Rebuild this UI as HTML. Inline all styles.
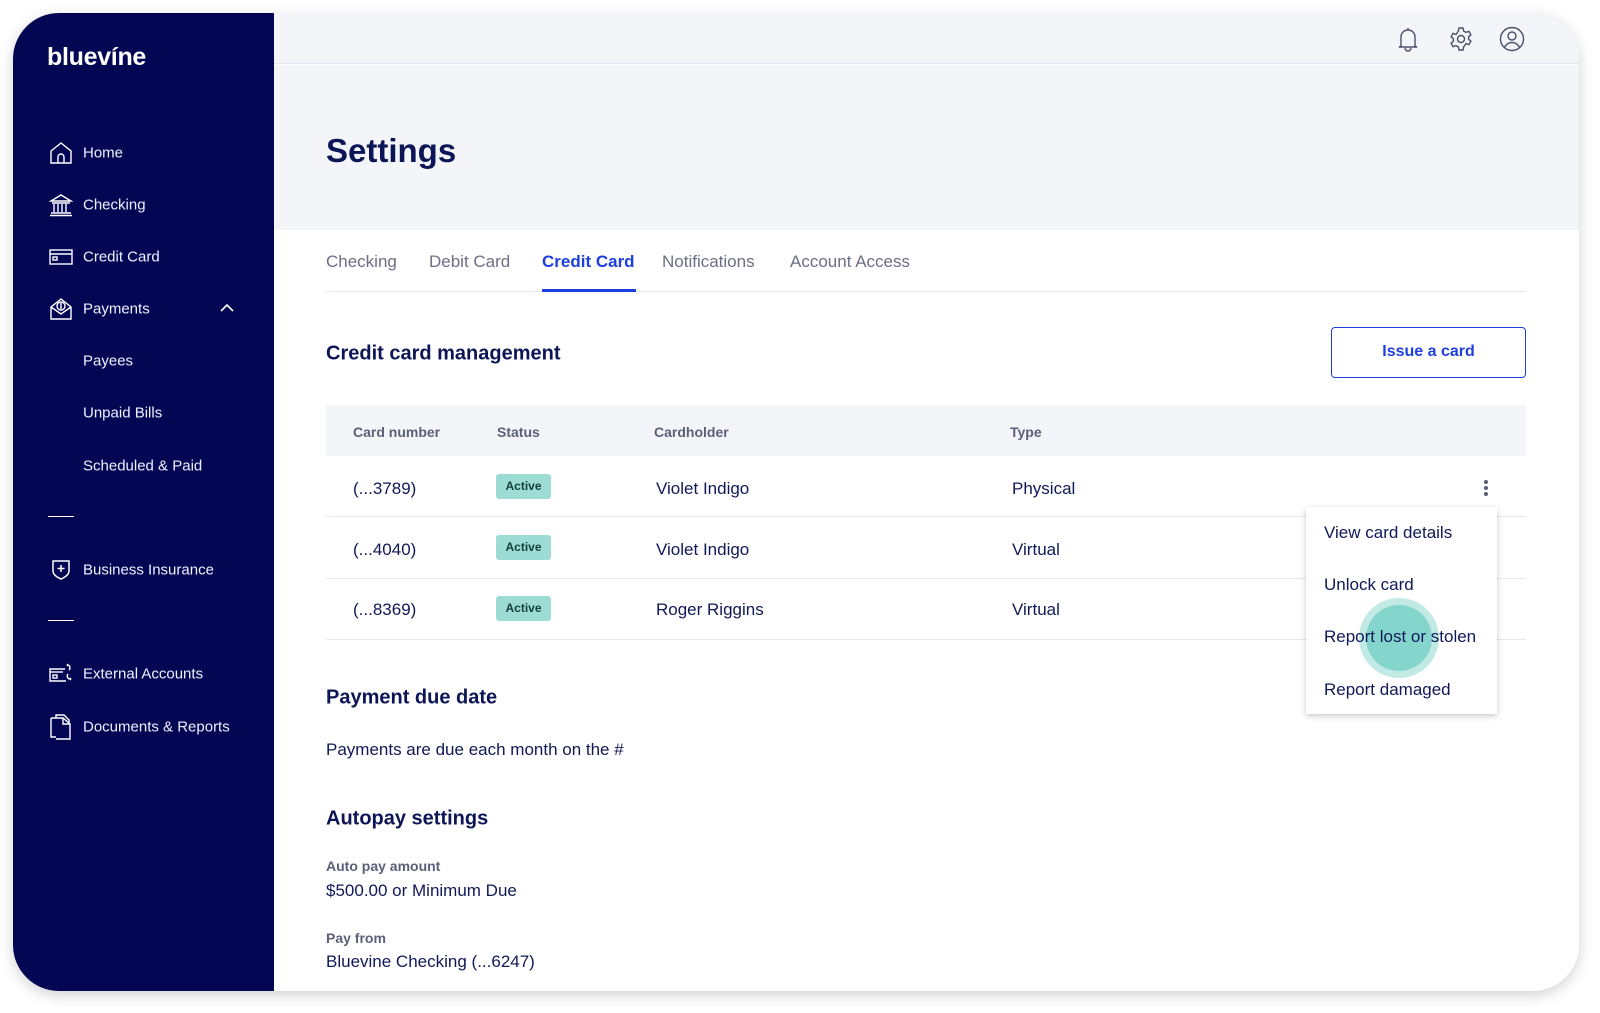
<!DOCTYPE html>
<html><head><meta charset="utf-8"><style>
*{box-sizing:border-box;margin:0;padding:0}
body{width:1600px;height:1013px;background:#fff;font-family:"Liberation Sans",sans-serif;position:relative;overflow:hidden;color:#101857}
.frame{position:absolute;left:13px;top:13px;width:1566px;height:978px;border-radius:46px;overflow:hidden;background:#fff;box-shadow:0 4px 14px rgba(0,0,0,.18)}
.side{position:absolute;left:0;top:0;width:261px;height:100%;background:#020653;color:#fff}
.abs{position:absolute;white-space:nowrap}
.logo{left:34px;top:30px;font-size:25px;font-weight:bold;letter-spacing:-0.3px}
.nav{left:70px;font-size:15px;color:#eef0ff;transform:translateY(-50%)}
.ic{position:absolute;left:36px;transform:translateY(-50%)}
.line{position:absolute;left:35px;width:26px;height:1px;background:#fff}
.top{position:absolute;left:261px;top:0;right:0;height:51px;background:#f4f5f9;border-bottom:1px solid #e2e5ee}
.hdr{position:absolute;left:261px;top:52px;right:0;height:165px;background:#f4f5f9}
.t{transform:translateY(-50%)}
.tab{font-size:17px;color:#6b6f85}
.th{font-size:14px;font-weight:bold;color:#5b6078}
.td{font-size:17px;color:#101857}
.badge{position:absolute;left:483px;width:55px;height:25px;background:#9ddcd4;border-radius:3px;font-size:12px;font-weight:bold;color:#134238;text-align:center;line-height:25px}
.div{position:absolute;left:313px;width:1200px;height:1px;background:#e3e7f0}
.menu{position:absolute;left:1293px;top:494px;width:191px;height:207px;background:#fff;box-shadow:0 2px 6px rgba(0,0,0,.22)}
.mi{font-size:17px;color:#101857;left:1311px}
</style></head><body>
<div class="frame">
<div class="side">
<div class="abs logo">bluevíne</div>
<svg class="ic" style="top:140px" width="24" height="24" viewBox="0 0 24 24" fill="none" stroke="#fff" stroke-width="1.4"><path d="M2 10 12 2l10 8v12H2z"/><path d="M9 22v-6a3 3 0 0 1 6 0v6"/></svg>
<div class="abs nav" style="top:140px">Home</div>
<svg class="ic" style="top:192px" width="24" height="24" viewBox="0 0 24 24" fill="none" stroke="#fff" stroke-width="1.4"><path d="M2 8 12 2l10 6z"/><path d="M3 10h18M5 11v8M9 11v8M13 11v8M17 11v8M2 20h20M1 22.5h22"/></svg>
<div class="abs nav" style="top:192px">Checking</div>
<svg class="ic" style="top:244px" width="24" height="20" viewBox="0 0 24 20" fill="none" stroke="#fff" stroke-width="1.4"><rect x="1" y="3" width="22" height="14"/><path d="M1 7h22"/><rect x="4" y="10" width="4" height="3"/></svg>
<div class="abs nav" style="top:244px">Credit Card</div>
<svg class="ic" style="top:296px" width="24" height="24" viewBox="0 0 24 24" fill="none" stroke="#fff" stroke-width="1.4"><path d="M2 10v12h20V10L12 2z"/><path d="M2 10l10 7 10-7"/><circle cx="12" cy="9" r="4"/><path d="M12 6v6"/></svg>
<div class="abs nav" style="top:296px">Payments</div>
<svg class="abs" style="left:207px;top:290px" width="14" height="10" viewBox="0 0 14 10" fill="none" stroke="#fff" stroke-width="1.6"><path d="M1 8l6-6 6 6"/></svg>
<div class="abs nav" style="top:348px">Payees</div>
<div class="abs nav" style="top:400px">Unpaid Bills</div>
<div class="abs nav" style="top:453px">Scheduled &amp; Paid</div>
<div class="line" style="top:503px"></div>
<svg class="ic" style="top:557px;left:38px" width="20" height="22" viewBox="0 0 20 22" fill="none" stroke="#fff" stroke-width="1.5"><path d="M2 2h16v10c0 5-8 8-8 8s-8-3-8-8z"/><path d="M10 6v7M6.5 9.5h7"/></svg>
<div class="abs nav" style="top:557px">Business Insurance</div>
<div class="line" style="top:607px"></div>
<svg class="ic" style="top:661px" width="24" height="22" viewBox="0 0 24 22" fill="none" stroke="#fff" stroke-width="1.4"><path d="M16 6H1v12h16"/><path d="M1 9h13"/><rect x="4" y="12" width="4" height="3"/><path d="M19 2a3 3 0 0 1 1 5M21 16a3 3 0 0 1-2-5M18 1l1 1-1 1M22 15l-1 1 1 1"/></svg>
<div class="abs nav" style="top:661px">External Accounts</div>
<svg class="ic" style="top:714px;left:37px" width="22" height="26" viewBox="0 0 22 26" fill="none" stroke="#fff" stroke-width="1.4"><path d="M6 4V1h8l5 5v3"/><path d="M1 4h12l7 6v15H6"/><path d="M1 4v19h5"/><path d="M13 4v6h7"/></svg>
<div class="abs nav" style="top:714px">Documents &amp; Reports</div>
</div>
<div class="top"></div>
<svg class="abs" style="left:1384px;top:13px" width="22" height="26" viewBox="0 0 22 26" fill="none" stroke="#4a5068" stroke-width="1.4"><path d="M11 2v2M4 20V11a7 7 0 0 1 14 0v9l2 1H2z"/><path d="M8 22a3 3 0 0 0 6 0"/></svg>
<svg class="abs" style="left:1436px;top:14px" width="24" height="24" viewBox="0 0 24 24" fill="none" stroke="#4a5068" stroke-width="1.4"><circle cx="12" cy="12" r="3.5"/><path d="M10 1h4l.6 3 2.4 1.4 2.9-1 2 3.4-2.3 2v2.4l2.3 2-2 3.4-2.9-1L14.6 20 14 23h-4l-.6-3-2.4-1.4-2.9 1-2-3.4 2.3-2v-2.4l-2.3-2 2-3.4 2.9 1L9.4 4z"/></svg>
<svg class="abs" style="left:1486px;top:13px" width="26" height="26" viewBox="0 0 26 26" fill="none" stroke="#4a5068" stroke-width="1.4"><circle cx="13" cy="13" r="11.5"/><circle cx="13" cy="10" r="4"/><path d="M5.5 21.5c2-4 5-5 7.5-5s5.5 1 7.5 5"/></svg>
<div class="hdr"></div>
<div class="abs t" style="left:313px;top:138px;font-size:33px;font-weight:bold;color:#0c1555">Settings</div>
<div class="abs t tab" style="left:313px;top:249px">Checking</div>
<div class="abs t tab" style="left:416px;top:249px">Debit Card</div>
<div class="abs t tab" style="left:529px;top:249px;color:#1d3fe0;font-weight:bold">Credit Card</div>
<div class="abs t tab" style="left:649px;top:249px">Notifications</div>
<div class="abs t tab" style="left:777px;top:249px">Account Access</div>
<div class="abs" style="left:313px;top:278px;width:1200px;height:1px;background:#e3e7f0"></div>
<div class="abs" style="left:529px;top:276px;width:94px;height:3px;background:#1d3fe0"></div>
<div class="abs t" style="left:313px;top:341px;font-size:20px;font-weight:bold;color:#0c1555">Credit card management</div>
<div class="abs" style="left:1318px;top:314px;width:195px;height:51px;border:1.5px solid #1d3fe0;border-radius:4px;color:#1d3fe0;font-weight:bold;font-size:16px;text-align:center;line-height:48px">Issue a card</div>
<div class="abs" style="left:313px;top:392px;width:1200px;height:51px;background:#f4f5f9"></div>
<div class="abs t th" style="left:340px;top:419px">Card number</div>
<div class="abs t th" style="left:484px;top:419px">Status</div>
<div class="abs t th" style="left:641px;top:419px">Cardholder</div>
<div class="abs t th" style="left:997px;top:419px">Type</div>
<div class="abs t td" style="left:340px;top:476px">(...3789)</div>
<div class="badge" style="top:461px">Active</div>
<div class="abs t td" style="left:643px;top:476px">Violet Indigo</div>
<div class="abs t td" style="left:999px;top:476px">Physical</div>
<svg class="abs" style="left:1470px;top:466px" width="6" height="18" viewBox="0 0 6 18" fill="#5b6078"><circle cx="3" cy="3" r="2"/><circle cx="3" cy="9" r="2"/><circle cx="3" cy="15" r="2"/></svg>
<div class="div" style="top:503px"></div>
<div class="abs t td" style="left:340px;top:537px">(...4040)</div>
<div class="badge" style="top:522px">Active</div>
<div class="abs t td" style="left:643px;top:537px">Violet Indigo</div>
<div class="abs t td" style="left:999px;top:537px">Virtual</div>
<div class="div" style="top:565px"></div>
<div class="abs t td" style="left:340px;top:597px">(...8369)</div>
<div class="badge" style="top:583px">Active</div>
<div class="abs t td" style="left:643px;top:597px">Roger Riggins</div>
<div class="abs t td" style="left:999px;top:597px">Virtual</div>
<div class="div" style="top:626px"></div>
<div class="menu"></div>
<div class="abs t mi" style="top:520px">View card details</div>
<div class="abs t mi" style="top:572px">Unlock card</div>
<div class="abs" style="left:1346px;top:585px;width:80px;height:80px;border-radius:50%;background:rgba(92,200,187,.38)"></div>
<div class="abs" style="left:1353px;top:592px;width:66px;height:66px;border-radius:50%;background:rgba(92,200,187,.6)"></div>
<div class="abs t mi" style="top:624px">Report lost or stolen</div>
<div class="abs t mi" style="top:677px">Report damaged</div>
<div class="abs t" style="left:313px;top:685px;font-size:20px;font-weight:bold;color:#0c1555">Payment due date</div>
<div class="abs t td" style="left:313px;top:737px">Payments are due each month on the #</div>
<div class="abs t" style="left:313px;top:806px;font-size:20px;font-weight:bold;color:#0c1555">Autopay settings</div>
<div class="abs t" style="left:313px;top:853px;font-size:14px;font-weight:bold;color:#5b6078">Auto pay amount</div>
<div class="abs t td" style="left:313px;top:878px">$500.00 or Minimum Due</div>
<div class="abs t" style="left:313px;top:925px;font-size:14px;font-weight:bold;color:#5b6078">Pay from</div>
<div class="abs t td" style="left:313px;top:949px">Bluevine Checking (...6247)</div>
</div>
</body></html>
